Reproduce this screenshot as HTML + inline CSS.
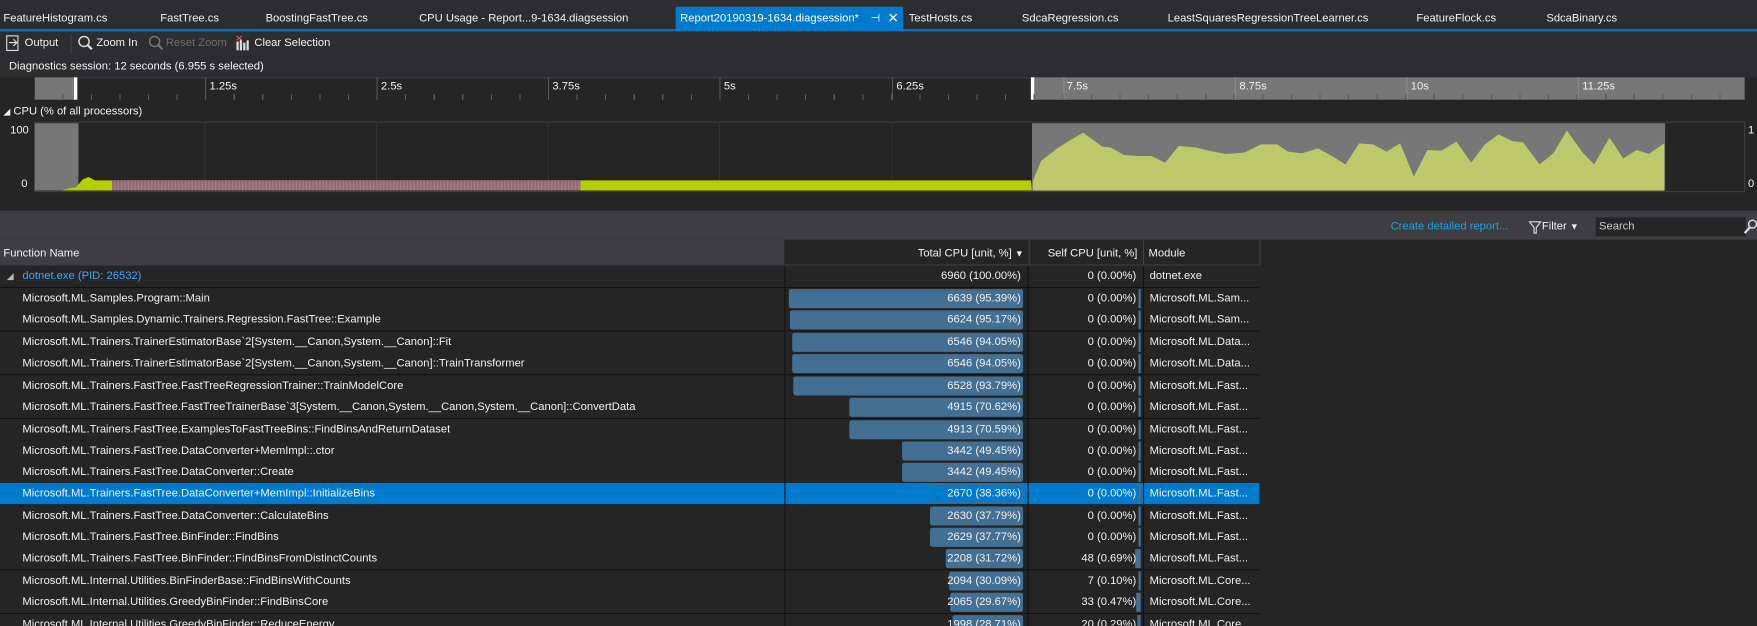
<!DOCTYPE html>
<html><head><meta charset="utf-8"><style>
html,body{margin:0;padding:0;width:1757px;height:626px;overflow:hidden;background:#252526;}
#w{position:absolute;left:0;top:0;width:1568px;height:559px;transform:scale(1.12054);transform-origin:0 0;font-family:"Liberation Sans",sans-serif;font-size:10px;color:#f1f1f1;background:#252526;overflow:hidden;}
.a{position:absolute;white-space:nowrap;}
.tab{position:absolute;top:11px;}
.row{position:absolute;left:0;width:1124px;height:19px;border-bottom:1px solid #111;background:#252526;}
.row .n{position:absolute;left:20px;top:4px;}
.row .t{position:absolute;left:700px;width:218px;height:19px;border-left:1px solid #111;border-right:1px solid #111;box-sizing:border-box;}
.row .s{position:absolute;left:918px;width:103px;height:19px;border-right:1px solid #111;box-sizing:border-box;}
.row .m{position:absolute;left:1026px;top:4px;}
.bar{position:absolute;right:4px;top:1px;height:17px;background:#436f93;border-radius:2px;}
.tv{position:absolute;right:6px;top:4px;}
.sb{position:absolute;right:2px;top:1px;height:17px;background:#436f93;}
.sel{background:#007acc;}
.sel .bar{background:transparent;border:1px solid #3f6e8f;box-sizing:border-box;}
</style></head><body><div id="w">
<div class="a" style="left:0;top:0;width:1568px;height:27px;background:#2d2d30"></div>
<div class="a" style="left:603px;top:6px;width:203px;height:21px;background:#007acc"></div>
<div class="a" style="left:0;top:26px;width:1568px;height:2px;background:#007acc"></div>
<span class="tab" style="left:3px">FeatureHistogram.cs</span>
<span class="tab" style="left:143px">FastTree.cs</span>
<span class="tab" style="left:237px">BoostingFastTree.cs</span>
<span class="tab" style="left:374px">CPU Usage - Report...9-1634.diagsession</span>
<span class="tab" style="left:607px;color:#fff">Report20190319-1634.diagsession*</span>
<span class="tab" style="left:777px;color:#fff">⊣</span>
<span class="tab" style="left:792px;color:#fff;font-size:12px;top:9px">✕</span>
<span class="tab" style="left:811px">TestHosts.cs</span>
<span class="tab" style="left:912px">SdcaRegression.cs</span>
<span class="tab" style="left:1042px">LeastSquaresRegressionTreeLearner.cs</span>
<span class="tab" style="left:1264px">FeatureFlock.cs</span>
<span class="tab" style="left:1380px">SdcaBinary.cs</span>
<div class="a" style="left:0;top:28px;width:1568px;height:22px;background:#2d2d30"></div>
<svg class="a" style="left:5px;top:31px" width="14" height="15"><rect x="1" y="1" width="10" height="13" fill="none" stroke="#ddd"/><path d="M3 7h7M7 4l3 3-3 3" stroke="#ddd" fill="none"/></svg>
<span class="a" style="left:22px;top:33px">Output</span>
<div class="a" style="left:63px;top:30px;width:1px;height:18px;background:#3f3f46"></div>
<svg class="a" style="left:69px;top:31px" width="14" height="15"><circle cx="6" cy="6" r="4.5" fill="none" stroke="#ddd" stroke-width="1.3"/><path d="M9 9l4 4" stroke="#ddd" stroke-width="2"/></svg>
<span class="a" style="left:86px;top:33px">Zoom In</span>
<svg class="a" style="left:132px;top:31px" width="14" height="15"><circle cx="6" cy="6" r="4.5" fill="none" stroke="#777" stroke-width="1.3"/><path d="M9 9l4 4" stroke="#777" stroke-width="2"/></svg>
<span class="a" style="left:148px;top:33px;color:#6d6d6d">Reset Zoom</span>
<svg class="a" style="left:210px;top:31px" width="14" height="15"><path d="M2 14V6M5 14V4M8 14V7M11 14V5" stroke="#ddd" stroke-width="2"/><path d="M1 1l5 4M6 1L1 5" stroke="#e05050"/></svg>
<span class="a" style="left:227px;top:33px">Clear Selection</span>
<div class="a" style="left:0;top:50px;width:1568px;height:19px;background:#2d2d30"></div>
<span class="a" style="left:8px;top:54px">Diagnostics session: 12 seconds (6.955 s selected)</span>
<div class="a" style="left:31px;top:69px;width:1526px;height:20px;background:#252526;border-top:1px solid #3f3f46"></div>
<div class="a" style="left:31px;top:69px;width:36px;height:20px;background:#777"></div>
<div class="a" style="left:921px;top:69px;width:636px;height:20px;background:#777"></div>
<div class="a" style="left:66px;top:69px;width:3px;height:20px;background:#fff"></div>
<div class="a" style="left:920px;top:69px;width:3px;height:20px;background:#fff"></div>
<div class="a" style="left:31px;top:84px;width:1526px;height:5px;background:repeating-linear-gradient(90deg,transparent 0 24.5px,#5a5a5a 24.5px 25.5px)"></div>
<div class="a" style="left:183px;top:69px;width:1px;height:20px;background:#555"></div>
<div class="a" style="left:336px;top:69px;width:1px;height:20px;background:#555"></div>
<div class="a" style="left:489px;top:69px;width:1px;height:20px;background:#555"></div>
<div class="a" style="left:642px;top:69px;width:1px;height:20px;background:#555"></div>
<div class="a" style="left:796px;top:69px;width:1px;height:20px;background:#555"></div>
<div class="a" style="left:949px;top:69px;width:1px;height:20px;background:#8a8a8a"></div>
<div class="a" style="left:1102px;top:69px;width:1px;height:20px;background:#8a8a8a"></div>
<div class="a" style="left:1255px;top:69px;width:1px;height:20px;background:#8a8a8a"></div>
<div class="a" style="left:1408px;top:69px;width:1px;height:20px;background:#8a8a8a"></div>
<span class="a" style="left:187px;top:72px">1.25s</span>
<span class="a" style="left:340px;top:72px">2.5s</span>
<span class="a" style="left:493px;top:72px">3.75s</span>
<span class="a" style="left:646px;top:72px">5s</span>
<span class="a" style="left:800px;top:72px">6.25s</span>
<span class="a" style="left:952px;top:72px">7.5s</span>
<span class="a" style="left:1106px;top:72px">8.75s</span>
<span class="a" style="left:1259px;top:72px">10s</span>
<span class="a" style="left:1412px;top:72px">11.25s</span>
<span class="a" style="left:3px;top:94px"><span style="font-size:8px">◢</span> CPU (% of all processors)</span>
<span class="a" style="left:9px;top:111px">100</span>
<span class="a" style="left:19px;top:159px">0</span>
<span class="a" style="left:1560px;top:111px">1</span>
<span class="a" style="left:1560px;top:159px">0</span>
<svg class="a" style="left:0;top:0" width="1568" height="190">
<defs><pattern id="st" width="3" height="9" patternUnits="userSpaceOnUse"><rect width="1" height="9" fill="#b07a8e"/></pattern></defs>
<rect x="31" y="109" width="1526" height="62" fill="#252526" stroke="#3f3f46"/>
<g stroke="#333337"><path d="M183 109v62M336 109v62M489 109v62M642 109v62M796 109v62M949 109v62M1102 109v62M1255 109v62M1408 109v62"/></g>
<rect x="31" y="110" width="39" height="60" fill="#777"/>
<rect x="921" y="110" width="565" height="60" fill="#777"/>
<path d="M55 170L62 168L68 167L74 160L79 158L85 161L920 161L921 170Z" fill="#b4d000"/>
<rect x="100" y="161" width="418" height="9" fill="#8e6a74"/>
<rect x="100" y="161" width="418" height="9" fill="url(#st)"/>
<g transform="matrix(0.4878 0 0 0.2975 803.2 89.25)">
<polygon fill="#bcc96a" points="243,272 243,243 258,183 285,148 310,122 335,98 370,140 385,142 410,165 435,168 460,168 485,188 510,138 540,142 565,152 595,162 630,158 660,133 690,133 710,155 735,160 765,145 790,168 815,193 840,130 865,133 890,155 915,130 940,230 965,150 990,152 1018,125 1045,188 1070,133 1095,103 1120,123 1140,127 1170,193 1195,160 1220,92 1250,160 1270,193 1298,113 1323,175 1348,150 1370,162 1398,130 1398,272"/>
</g>
</svg>
<div class="a" style="left:0;top:188px;width:1568px;height:26px;background:#3e3e42"></div>
<span class="a" style="left:1241px;top:197px;color:#1ba1e2">Create detailed report...</span>
<svg class="a" style="left:1364px;top:197px" width="12" height="12"><path d="M1 1h10L7 6v5H5V6Z" fill="none" stroke="#ddd"/></svg>
<span class="a" style="left:1376px;top:197px">Filter <span style="font-size:8px">▼</span></span>
<div class="a" style="left:1424px;top:194px;width:134px;height:17px;background:#252526"></div>
<span class="a" style="left:1427px;top:197px;color:#ccc">Search</span>
<svg class="a" style="left:1556px;top:195px" width="12" height="16"><circle cx="8" cy="5" r="3.5" fill="none" stroke="#ddd" stroke-width="1.3"/><path d="M5.5 8L1 13" stroke="#ddd" stroke-width="2"/></svg>
<div class="a" style="left:0;top:214px;width:700px;height:23px;background:#3e3e42"></div>
<div class="a" style="left:700px;top:214px;width:868px;height:23px;background:#252526"></div>
<span class="a" style="left:3px;top:221px">Function Name</span>
<span class="a" style="left:819px;top:221px">Total CPU [unit, %] <span style="font-size:8px">▼</span></span>
<div class="a" style="left:918px;top:214px;width:1px;height:23px;background:#3f3f46"></div>
<span class="a" style="left:935px;top:221px">Self CPU [unit, %]</span>
<div class="a" style="left:1020px;top:214px;width:1px;height:23px;background:#3f3f46"></div>
<span class="a" style="left:1025px;top:221px">Module</span>
<div class="a" style="left:1124px;top:214px;width:1px;height:23px;background:#3f3f46"></div>
<div class="a" style="left:700px;top:236px;width:424px;height:1px;background:#3f3f46"></div>

<div class="row" style="top:237px"><span class="a" style="left:6px;top:5px;font-size:8px;color:#bbb">◢</span><span class="n" style="color:#3ea6ff">dotnet.exe (PID: 26532)</span><div class="t"><span class="tv">6960 (100.00%)</span></div><div class="s"><span class="tv">0 (0.00%)</span></div><span class="m">dotnet.exe</span></div>
<div class="row" style="top:257px"><span class="n">Microsoft.ML.Samples.Program::Main</span><div class="t"><div class="bar" style="width:209px"></div><span class="tv">6639 (95.39%)</span></div><div class="s"><div class="sb" style="width:2px"></div><span class="tv">0 (0.00%)</span></div><span class="m">Microsoft.ML.Sam...</span></div>
<div class="row" style="top:276px"><span class="n">Microsoft.ML.Samples.Dynamic.Trainers.Regression.FastTree::Example</span><div class="t"><div class="bar" style="width:208px"></div><span class="tv">6624 (95.17%)</span></div><div class="s"><div class="sb" style="width:2px"></div><span class="tv">0 (0.00%)</span></div><span class="m">Microsoft.ML.Sam...</span></div>
<div class="row" style="top:296px"><span class="n">Microsoft.ML.Trainers.TrainerEstimatorBase`2[System.__Canon,System.__Canon]::Fit</span><div class="t"><div class="bar" style="width:206px"></div><span class="tv">6546 (94.05%)</span></div><div class="s"><div class="sb" style="width:2px"></div><span class="tv">0 (0.00%)</span></div><span class="m">Microsoft.ML.Data...</span></div>
<div class="row" style="top:315px"><span class="n">Microsoft.ML.Trainers.TrainerEstimatorBase`2[System.__Canon,System.__Canon]::TrainTransformer</span><div class="t"><div class="bar" style="width:206px"></div><span class="tv">6546 (94.05%)</span></div><div class="s"><div class="sb" style="width:2px"></div><span class="tv">0 (0.00%)</span></div><span class="m">Microsoft.ML.Data...</span></div>
<div class="row" style="top:335px"><span class="n">Microsoft.ML.Trainers.FastTree.FastTreeRegressionTrainer::TrainModelCore</span><div class="t"><div class="bar" style="width:205px"></div><span class="tv">6528 (93.79%)</span></div><div class="s"><div class="sb" style="width:2px"></div><span class="tv">0 (0.00%)</span></div><span class="m">Microsoft.ML.Fast...</span></div>
<div class="row" style="top:354px"><span class="n">Microsoft.ML.Trainers.FastTree.FastTreeTrainerBase`3[System.__Canon,System.__Canon,System.__Canon]::ConvertData</span><div class="t"><div class="bar" style="width:155px"></div><span class="tv">4915 (70.62%)</span></div><div class="s"><div class="sb" style="width:2px"></div><span class="tv">0 (0.00%)</span></div><span class="m">Microsoft.ML.Fast...</span></div>
<div class="row" style="top:374px"><span class="n">Microsoft.ML.Trainers.FastTree.ExamplesToFastTreeBins::FindBinsAndReturnDataset</span><div class="t"><div class="bar" style="width:155px"></div><span class="tv">4913 (70.59%)</span></div><div class="s"><div class="sb" style="width:2px"></div><span class="tv">0 (0.00%)</span></div><span class="m">Microsoft.ML.Fast...</span></div>
<div class="row" style="top:393px"><span class="n">Microsoft.ML.Trainers.FastTree.DataConverter+MemImpl::.ctor</span><div class="t"><div class="bar" style="width:108px"></div><span class="tv">3442 (49.45%)</span></div><div class="s"><div class="sb" style="width:2px"></div><span class="tv">0 (0.00%)</span></div><span class="m">Microsoft.ML.Fast...</span></div>
<div class="row" style="top:412px"><span class="n">Microsoft.ML.Trainers.FastTree.DataConverter::Create</span><div class="t"><div class="bar" style="width:108px"></div><span class="tv">3442 (49.45%)</span></div><div class="s"><div class="sb" style="width:2px"></div><span class="tv">0 (0.00%)</span></div><span class="m">Microsoft.ML.Fast...</span></div>
<div class="row sel" style="top:431px"><span class="n">Microsoft.ML.Trainers.FastTree.DataConverter+MemImpl::InitializeBins</span><div class="t"><div class="bar" style="width:84px"></div><span class="tv">2670 (38.36%)</span></div><div class="s"><div class="sb" style="width:2px"></div><span class="tv">0 (0.00%)</span></div><span class="m">Microsoft.ML.Fast...</span></div>
<div class="row" style="top:451px"><span class="n">Microsoft.ML.Trainers.FastTree.DataConverter::CalculateBins</span><div class="t"><div class="bar" style="width:83px"></div><span class="tv">2630 (37.79%)</span></div><div class="s"><div class="sb" style="width:2px"></div><span class="tv">0 (0.00%)</span></div><span class="m">Microsoft.ML.Fast...</span></div>
<div class="row" style="top:470px"><span class="n">Microsoft.ML.Trainers.FastTree.BinFinder::FindBins</span><div class="t"><div class="bar" style="width:83px"></div><span class="tv">2629 (37.77%)</span></div><div class="s"><div class="sb" style="width:2px"></div><span class="tv">0 (0.00%)</span></div><span class="m">Microsoft.ML.Fast...</span></div>
<div class="row" style="top:489px"><span class="n">Microsoft.ML.Trainers.FastTree.BinFinder::FindBinsFromDistinctCounts</span><div class="t"><div class="bar" style="width:69px"></div><span class="tv">2208 (31.72%)</span></div><div class="s"><div class="sb" style="width:5px"></div><span class="tv">48 (0.69%)</span></div><span class="m">Microsoft.ML.Fast...</span></div>
<div class="row" style="top:509px"><span class="n">Microsoft.ML.Internal.Utilities.BinFinderBase::FindBinsWithCounts</span><div class="t"><div class="bar" style="width:66px"></div><span class="tv">2094 (30.09%)</span></div><div class="s"><div class="sb" style="width:2px"></div><span class="tv">7 (0.10%)</span></div><span class="m">Microsoft.ML.Core...</span></div>
<div class="row" style="top:528px"><span class="n">Microsoft.ML.Internal.Utilities.GreedyBinFinder::FindBinsCore</span><div class="t"><div class="bar" style="width:65px"></div><span class="tv">2065 (29.67%)</span></div><div class="s"><div class="sb" style="width:4px"></div><span class="tv">33 (0.47%)</span></div><span class="m">Microsoft.ML.Core...</span></div>
<div class="row" style="top:548px"><span class="n">Microsoft.ML.Internal.Utilities.GreedyBinFinder::ReduceEnergy</span><div class="t"><div class="bar" style="width:63px"></div><span class="tv">1998 (28.71%)</span></div><div class="s"><div class="sb" style="width:3px"></div><span class="tv">20 (0.29%)</span></div><span class="m">Microsoft.ML.Core...</span></div>
</div></body></html>
